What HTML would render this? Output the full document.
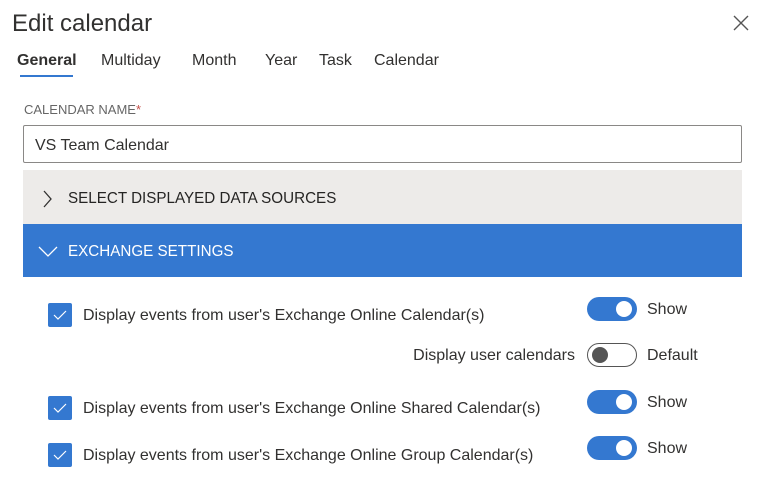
<!DOCTYPE html>
<html><head><meta charset="utf-8"><style>
*{margin:0;padding:0;box-sizing:border-box}
body{width:768px;height:478px;background:#fff;font-family:"Liberation Sans",sans-serif;color:#323130;position:relative;overflow:hidden}
.a{position:absolute;white-space:nowrap}
.tab{position:absolute;top:52px;font-size:16px;color:#323130}
.cb{position:absolute;left:48px;width:24px;height:24px;background:#3478d0;border-radius:2px}
.cb svg{position:absolute;left:5px;top:6px}
.lbl{position:absolute;left:83px;font-size:16px;line-height:20px}
.tg{position:absolute;left:587px;width:50px;height:24px;border-radius:12px;background:#3478d0}
.tg::after{content:"";position:absolute;right:5px;top:4px;width:16px;height:16px;border-radius:50%;background:#fff}
.tg.off{background:#fff;border:1px solid #555}
.tg.off::after{left:4px;right:auto;top:3px;background:#555}
.st{position:absolute;left:647px;font-size:16px;line-height:20px}
.sq{transform:scaleX(0.95);transform-origin:left}
</style></head><body>
<div class="a" style="left:12px;top:9px;font-size:24px;line-height:30px">Edit calendar</div>
<svg class="a" style="left:733px;top:15px" width="16" height="16" viewBox="0 0 16 16"><path d="M1 1L15 15M15 1L1 15" stroke="#555" stroke-width="1.4"/></svg>
<div class="tab" style="left:17px;font-weight:bold;color:#323130">General</div>
<div class="tab" style="left:101px">Multiday</div>
<div class="tab" style="left:192px">Month</div>
<div class="tab" style="left:265px">Year</div>
<div class="tab" style="left:319px">Task</div>
<div class="tab" style="left:374px">Calendar</div>
<div class="a" style="left:20px;top:75px;width:53px;height:2px;background:#3478d0"></div>
<div class="a" style="left:24px;top:102px;font-size:13px;color:#666">CALENDAR NAME<span style="color:#c4504a">*</span></div>
<div class="a" style="left:23px;top:125px;width:719px;height:38px;border:1px solid #8a8886;border-radius:2px"></div>
<div class="a" style="left:35px;top:136px;font-size:16px;line-height:20px">VS Team Calendar</div>
<div class="a" style="left:23px;top:170px;width:719px;height:54px;background:#edebe9"></div>
<svg class="a" style="left:43px;top:190px" width="10" height="18" viewBox="0 0 10 18"><path d="M1 1L8 9L1 17" stroke="#323130" stroke-width="1.3" fill="none"/></svg>
<div class="a sq" style="left:68px;top:189px;font-size:16px;line-height:20px;color:#252423">SELECT DISPLAYED DATA SOURCES</div>
<div class="a" style="left:23px;top:224px;width:719px;height:53px;background:#3478d0"></div>
<svg class="a" style="left:38px;top:246px" width="20" height="12" viewBox="0 0 20 12"><path d="M1 1L10 10L19 1" stroke="#fff" stroke-width="1.3" fill="none"/></svg>
<div class="a sq" style="left:68px;top:242px;font-size:16px;line-height:20px;color:#fff">EXCHANGE SETTINGS</div>

<div class="cb" style="top:303px"><svg width="14" height="12" viewBox="0 0 14 12"><path d="M1 6L5 10L13 2" stroke="#fff" stroke-width="1.2" fill="none"/></svg></div>
<div class="lbl" style="top:306px">Display events from user's Exchange Online Calendar(s)</div>
<div class="tg" style="top:297px"></div><div class="st" style="top:300px">Show</div>

<div class="a" style="right:193px;top:346px;font-size:16px;line-height:20px">Display user calendars</div>
<div class="tg off" style="top:343px"></div><div class="st" style="top:346px">Default</div>

<div class="cb" style="top:396px"><svg width="14" height="12" viewBox="0 0 14 12"><path d="M1 6L5 10L13 2" stroke="#fff" stroke-width="1.2" fill="none"/></svg></div>
<div class="lbl" style="top:399px">Display events from user's Exchange Online Shared Calendar(s)</div>
<div class="tg" style="top:390px"></div><div class="st" style="top:393px">Show</div>

<div class="cb" style="top:443px"><svg width="14" height="12" viewBox="0 0 14 12"><path d="M1 6L5 10L13 2" stroke="#fff" stroke-width="1.2" fill="none"/></svg></div>
<div class="lbl" style="top:446px">Display events from user's Exchange Online Group Calendar(s)</div>
<div class="tg" style="top:436px"></div><div class="st" style="top:439px">Show</div>
</body></html>
